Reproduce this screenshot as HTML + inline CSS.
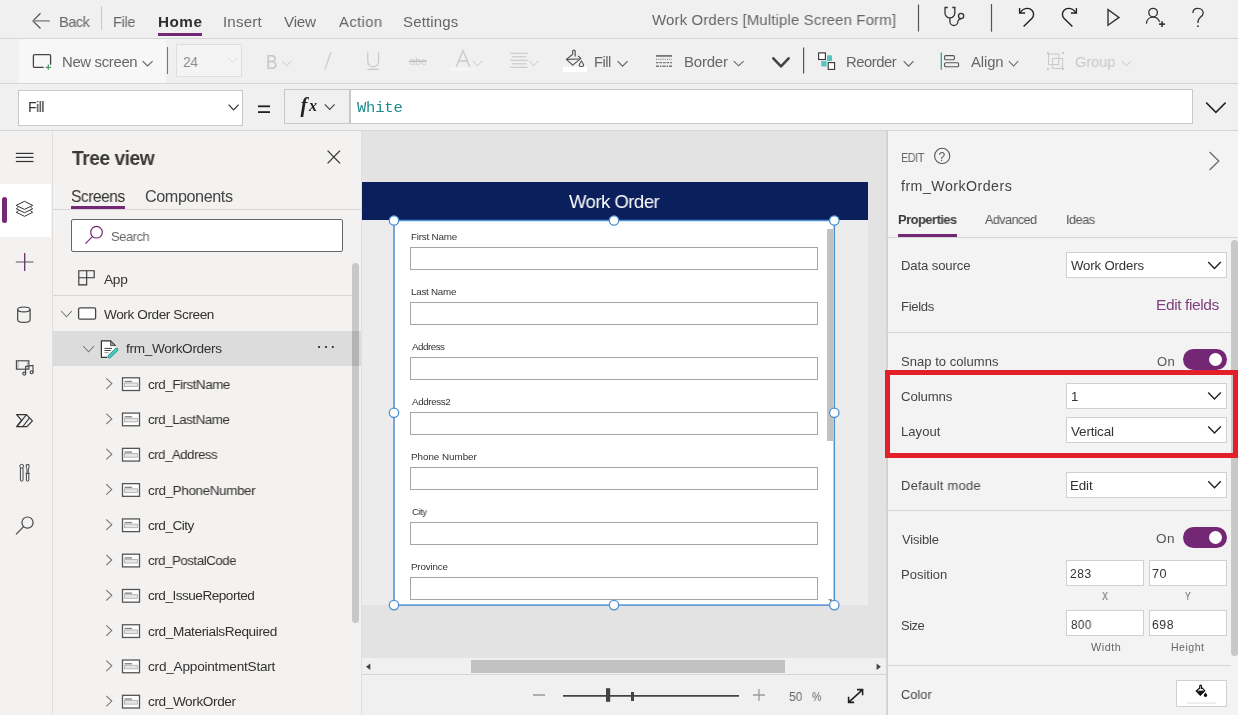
<!DOCTYPE html>
<html><head><meta charset="utf-8"><style>
html,body{margin:0;padding:0;}
body{width:1238px;height:716px;position:relative;overflow:hidden;background:#f0f0f0;font-family:"Liberation Sans",sans-serif;}
.r{position:absolute;}
.t{position:absolute;white-space:pre;transform-origin:0 0;will-change:transform;}
svg{position:absolute;overflow:visible;}
</style></head><body>
<div class="r" style="left:0px;top:0px;width:1238px;height:38px;background:#f0f0f0"></div><div class="r" style="left:0px;top:38px;width:1238px;height:1px;background:#d6d6d6"></div><div class="r" style="left:0px;top:39px;width:1238px;height:44px;background:#f0f0f0"></div><div class="r" style="left:19px;top:39px;width:147px;height:44px;background:#f7f7f7"></div><div class="r" style="left:0px;top:83px;width:1238px;height:1px;background:#d6d6d6"></div><div class="r" style="left:0px;top:84px;width:1238px;height:46px;background:#f0f0f0"></div><div class="r" style="left:0px;top:130px;width:1238px;height:1px;background:#d6d6d6"></div><div class="r" style="left:0px;top:131px;width:52px;height:584px;background:#f3f2f1"></div><div class="r" style="left:52px;top:131px;width:1px;height:584px;background:#e1dfdd"></div><div class="r" style="left:0px;top:184px;width:51px;height:53px;background:#ffffff"></div><div class="r" style="left:2px;top:197px;width:5px;height:26px;background:#742774;border-radius:3px"></div><div class="r" style="left:53px;top:131px;width:308px;height:584px;background:#f3f2f1"></div><div class="r" style="left:361px;top:131px;width:1px;height:584px;background:#e1dfdd"></div><div class="r" style="left:53px;top:209px;width:308px;height:1px;background:#d6d6d6"></div><div class="r" style="left:71px;top:206px;width:54px;height:3px;background:#742774"></div><div class="r" style="left:53px;top:295px;width:299px;height:1px;background:#d6d6d6"></div><div class="r" style="left:53px;top:331px;width:308px;height:35px;background:#dcdcdc"></div><div class="r" style="left:71px;top:219px;width:272px;height:33px;background:#ffffff;border:1px solid #666;box-sizing:border-box;border-radius:2px"></div><div class="r" style="left:352px;top:263px;width:7px;height:360px;background:#c8c8c8;border-radius:4px"></div><div class="r" style="left:352px;top:331px;width:7px;height:35px;background:#b4b4b4"></div><div class="r" style="left:362px;top:131px;width:524px;height:527px;background:#e3e3e3"></div><div class="r" style="left:362px;top:182px;width:506px;height:38px;background:#0a1f5c"></div><div class="r" style="left:362px;top:220px;width:506px;height:385px;background:#ececec"></div><div class="r" style="left:395px;top:220px;width:439px;height:385px;background:#ffffff"></div><div class="r" style="left:410px;top:247px;width:408px;height:23px;background:#fff;border:1px solid #a6a6a6;box-sizing:border-box"></div><div class="r" style="left:410px;top:302px;width:408px;height:23px;background:#fff;border:1px solid #a6a6a6;box-sizing:border-box"></div><div class="r" style="left:410px;top:357px;width:408px;height:23px;background:#fff;border:1px solid #a6a6a6;box-sizing:border-box"></div><div class="r" style="left:410px;top:412px;width:408px;height:23px;background:#fff;border:1px solid #a6a6a6;box-sizing:border-box"></div><div class="r" style="left:410px;top:467px;width:408px;height:23px;background:#fff;border:1px solid #a6a6a6;box-sizing:border-box"></div><div class="r" style="left:410px;top:522px;width:408px;height:23px;background:#fff;border:1px solid #a6a6a6;box-sizing:border-box"></div><div class="r" style="left:410px;top:577px;width:408px;height:23px;background:#fff;border:1px solid #a6a6a6;box-sizing:border-box"></div><div class="r" style="left:827px;top:229px;width:6px;height:212px;background:#c2c2c2"></div><div class="r" style="left:362px;top:658px;width:524px;height:16px;background:#f0f0f0"></div><div class="r" style="left:471px;top:660px;width:314px;height:13px;background:#c2c2c2"></div><div class="r" style="left:362px;top:674px;width:524px;height:1px;background:#d6d6d6"></div><div class="r" style="left:362px;top:675px;width:524px;height:40px;background:#f0f0f0"></div><div class="r" style="left:886px;top:131px;width:1px;height:584px;background:#d6d6d6"></div><div class="r" style="left:887px;top:131px;width:351px;height:584px;background:#f3f3f3"></div><div class="r" style="left:887px;top:131px;width:1px;height:584px;background:#d0d0d0"></div><div class="r" style="left:887px;top:237px;width:351px;height:1px;background:#d6d6d6"></div><div class="r" style="left:898px;top:234px;width:59px;height:3px;background:#742774"></div><div class="r" style="left:887px;top:332px;width:344px;height:1px;background:#d6d6d6"></div><div class="r" style="left:887px;top:510px;width:344px;height:1px;background:#d6d6d6"></div><div class="r" style="left:887px;top:665px;width:344px;height:1px;background:#d6d6d6"></div><div class="r" style="left:1231px;top:240px;width:7px;height:416px;background:#c8c8c8;border-radius:4px"></div><div class="r" style="left:1066px;top:252px;width:161px;height:26px;background:#fff;border:1px solid #d0d0d0;box-sizing:border-box"></div><div class="r" style="left:1066px;top:383px;width:161px;height:26px;background:#fff;border:1px solid #d0d0d0;box-sizing:border-box"></div><div class="r" style="left:1066px;top:417px;width:161px;height:26px;background:#fff;border:1px solid #d0d0d0;box-sizing:border-box"></div><div class="r" style="left:1066px;top:472px;width:161px;height:26px;background:#fff;border:1px solid #d0d0d0;box-sizing:border-box"></div><div class="r" style="left:1066px;top:560px;width:78px;height:26px;background:#fff;border:1px solid #d0d0d0;box-sizing:border-box"></div><div class="r" style="left:1149px;top:560px;width:78px;height:26px;background:#fff;border:1px solid #d0d0d0;box-sizing:border-box"></div><div class="r" style="left:1066px;top:610px;width:78px;height:26px;background:#fff;border:1px solid #d0d0d0;box-sizing:border-box"></div><div class="r" style="left:1149px;top:610px;width:78px;height:26px;background:#fff;border:1px solid #d0d0d0;box-sizing:border-box"></div><div class="r" style="left:1176px;top:680px;width:51px;height:27px;background:#fff;border:1px solid #d0d0d0;box-sizing:border-box"></div><div class="r" style="left:1183px;top:349px;width:44px;height:21px;background:#742774;border-radius:11px"></div><div class="r" style="left:1209px;top:353px;width:13px;height:13px;background:#fff;border-radius:50%"></div><div class="r" style="left:1183px;top:527px;width:44px;height:21px;background:#742774;border-radius:11px"></div><div class="r" style="left:1209px;top:531px;width:13px;height:13px;background:#fff;border-radius:50%"></div><div class="r" style="left:885px;top:370px;width:353px;height:88px;border:5px solid #e3202a;box-sizing:border-box"></div><div class="r" style="left:18px;top:90px;width:225px;height:36px;background:#fff;border:1px solid #c8c8c8;box-sizing:border-box"></div><div class="r" style="left:284px;top:89px;width:66px;height:35px;background:#f0f0f0;border:1px solid #c8c8c8;box-sizing:border-box"></div><div class="r" style="left:350px;top:89px;width:843px;height:35px;background:#fff;border:1px solid #c8c8c8;box-sizing:border-box"></div><div class="r" style="left:176px;top:44px;width:66px;height:33px;background:#f4f4f4;border:1px solid #dedede;box-sizing:border-box"></div><div class="r" style="left:0px;top:715px;width:1238px;height:1px;background:#ffffff"></div>
<div class="t" style="left:58.50px;top:14.00px;font-size:15px;line-height:15px;font-weight:400;color:#666666;letter-spacing:-0.500px;transform:scaleX(0.9742);font-family:'Liberation Sans'">Back</div>
<div class="t" style="left:112.90px;top:14.00px;font-size:15px;line-height:15px;font-weight:400;color:#666666;letter-spacing:-0.400px;transform:scaleX(0.9727);font-family:'Liberation Sans'">File</div>
<div class="t" style="left:157.60px;top:14.00px;font-size:15px;line-height:15px;font-weight:700;color:#2f2f2f;letter-spacing:0.500px;transform:scaleX(1.0167);font-family:'Liberation Sans'">Home</div>
<div class="t" style="left:222.60px;top:14.00px;font-size:15px;line-height:15px;font-weight:400;color:#666666;letter-spacing:0.160px;transform:scaleX(1.0108);font-family:'Liberation Sans'">Insert</div>
<div class="t" style="left:284.00px;top:14.00px;font-size:15px;line-height:15px;font-weight:400;color:#666666;letter-spacing:-0.266px;transform:scaleX(1.0194);font-family:'Liberation Sans'">View</div>
<div class="t" style="left:338.50px;top:14.00px;font-size:15px;line-height:15px;font-weight:400;color:#666666;letter-spacing:0.400px;transform:scaleX(0.9884);font-family:'Liberation Sans'">Action</div>
<div class="t" style="left:403.00px;top:14.00px;font-size:15px;line-height:15px;font-weight:400;color:#666666;letter-spacing:0.143px;transform:scaleX(1.0);font-family:'Liberation Sans'">Settings</div>
<div class="t" style="left:651.60px;top:12.00px;font-size:15px;line-height:15px;font-weight:400;color:#666666;letter-spacing:0.145px;transform:scaleX(0.9975);font-family:'Liberation Sans'">Work Orders [Multiple Screen Form]</div>
<div class="t" style="left:61.50px;top:55.00px;font-size:14.8px;line-height:14.8px;font-weight:400;color:#666666;letter-spacing:-0.334px;transform:scaleX(1.0068);font-family:'Liberation Sans'">New screen</div>
<div class="t" style="left:182.70px;top:55.00px;font-size:14.8px;line-height:14.8px;font-weight:400;color:#8c8c8c;letter-spacing:-0.500px;transform:scaleX(0.94);font-family:'Liberation Sans'">24</div>
<div class="t" style="left:594.30px;top:55.00px;font-size:14.8px;line-height:14.8px;font-weight:400;color:#666666;letter-spacing:-0.500px;transform:scaleX(0.9813);font-family:'Liberation Sans'">Fill</div>
<div class="t" style="left:683.50px;top:55.00px;font-size:14.8px;line-height:14.8px;font-weight:400;color:#666666;letter-spacing:-0.200px;transform:scaleX(1.0119);font-family:'Liberation Sans'">Border</div>
<div class="t" style="left:845.50px;top:55.00px;font-size:14.8px;line-height:14.8px;font-weight:400;color:#666666;letter-spacing:-0.467px;transform:scaleX(1.002);font-family:'Liberation Sans'">Reorder</div>
<div class="t" style="left:970.70px;top:55.00px;font-size:14.8px;line-height:14.8px;font-weight:400;color:#666666;letter-spacing:-0.100px;transform:scaleX(0.9937);font-family:'Liberation Sans'">Align</div>
<div class="t" style="left:1074.80px;top:55.00px;font-size:14.8px;line-height:14.8px;font-weight:400;color:#c8c8c8;letter-spacing:-0.050px;transform:scaleX(0.985);font-family:'Liberation Sans'">Group</div>
<div class="t" style="left:27.90px;top:99.00px;font-size:15px;line-height:15px;font-weight:400;color:#333333;letter-spacing:-0.500px;transform:scaleX(0.9375);font-family:'Liberation Sans'">Fill</div>
<div class="t" style="left:356.70px;top:101.00px;font-size:15.5px;line-height:15.5px;font-weight:400;color:#1e8a8a;letter-spacing:-0.200px;transform:scaleX(1.0022);font-family:'Liberation Mono'">White</div>
<div class="t" style="left:71.50px;top:149.00px;font-size:19.8px;line-height:19.8px;font-weight:700;color:#3a3938;letter-spacing:-0.500px;transform:scaleX(0.9706);font-family:'Liberation Sans'">Tree view</div>
<div class="t" style="left:70.50px;top:188.00px;font-size:16.2px;line-height:16.2px;font-weight:400;color:#323130;letter-spacing:-0.500px;transform:scaleX(0.9618);font-family:'Liberation Sans'">Screens</div>
<div class="t" style="left:144.60px;top:188.00px;font-size:16.2px;line-height:16.2px;font-weight:400;color:#444444;letter-spacing:-0.422px;transform:scaleX(0.9954);font-family:'Liberation Sans'">Components</div>
<div class="t" style="left:110.90px;top:230.00px;font-size:13.2px;line-height:13.2px;font-weight:400;color:#666666;letter-spacing:-0.480px;transform:scaleX(0.9816);font-family:'Liberation Sans'">Search</div>
<div class="t" style="left:103.80px;top:273.00px;font-size:13.6px;line-height:13.6px;font-weight:400;color:#323130;letter-spacing:-0.300px;transform:scaleX(1.0087);font-family:'Liberation Sans'">App</div>
<div class="t" style="left:103.80px;top:308.00px;font-size:13.6px;line-height:13.6px;font-weight:400;color:#323130;letter-spacing:-0.401px;transform:scaleX(0.9982);font-family:'Liberation Sans'">Work Order Screen</div>
<div class="t" style="left:125.70px;top:342.00px;font-size:13.6px;line-height:13.6px;font-weight:400;color:#323130;letter-spacing:-0.339px;transform:scaleX(1.0032);font-family:'Liberation Sans'">frm_WorkOrders</div>
<div class="t" style="left:147.80px;top:378.00px;font-size:13.6px;line-height:13.6px;font-weight:400;color:#323130;letter-spacing:-0.500px;transform:scaleX(0.9915);font-family:'Liberation Sans'">crd_FirstName</div>
<div class="t" style="left:147.80px;top:413.00px;font-size:13.6px;line-height:13.6px;font-weight:400;color:#323130;letter-spacing:-0.500px;transform:scaleX(0.9889);font-family:'Liberation Sans'">crd_LastName</div>
<div class="t" style="left:147.80px;top:448.00px;font-size:13.6px;line-height:13.6px;font-weight:400;color:#323130;letter-spacing:-0.500px;transform:scaleX(0.9771);font-family:'Liberation Sans'">crd_Address</div>
<div class="t" style="left:147.80px;top:484.00px;font-size:13.6px;line-height:13.6px;font-weight:400;color:#323130;letter-spacing:-0.400px;transform:scaleX(0.9926);font-family:'Liberation Sans'">crd_PhoneNumber</div>
<div class="t" style="left:147.80px;top:519.00px;font-size:13.6px;line-height:13.6px;font-weight:400;color:#323130;letter-spacing:-0.500px;transform:scaleX(0.9933);font-family:'Liberation Sans'">crd_City</div>
<div class="t" style="left:147.80px;top:554.00px;font-size:13.6px;line-height:13.6px;font-weight:400;color:#323130;letter-spacing:-0.500px;transform:scaleX(0.982);font-family:'Liberation Sans'">crd_PostalCode</div>
<div class="t" style="left:147.80px;top:589.00px;font-size:13.6px;line-height:13.6px;font-weight:400;color:#323130;letter-spacing:-0.500px;transform:scaleX(0.9981);font-family:'Liberation Sans'">crd_IssueReported</div>
<div class="t" style="left:147.80px;top:625.00px;font-size:13.6px;line-height:13.6px;font-weight:400;color:#323130;letter-spacing:-0.380px;transform:scaleX(1.0016);font-family:'Liberation Sans'">crd_MaterialsRequired</div>
<div class="t" style="left:147.80px;top:660.00px;font-size:13.6px;line-height:13.6px;font-weight:400;color:#323130;letter-spacing:-0.231px;transform:scaleX(1.0024);font-family:'Liberation Sans'">crd_AppointmentStart</div>
<div class="t" style="left:147.80px;top:695.00px;font-size:13.6px;line-height:13.6px;font-weight:400;color:#323130;letter-spacing:-0.384px;transform:scaleX(0.9966);font-family:'Liberation Sans'">crd_WorkOrder</div>
<div class="t" style="left:569.30px;top:192.00px;font-size:19px;line-height:19px;font-weight:400;color:#ffffff;letter-spacing:-0.500px;transform:scaleX(0.972);font-family:'Liberation Sans'">Work Order</div>
<div class="t" style="left:411.20px;top:232.00px;font-size:9.8px;line-height:9.8px;font-weight:400;color:#333333;letter-spacing:-0.200px;transform:scaleX(1.0022);font-family:'Liberation Sans'">First Name</div>
<div class="t" style="left:411.20px;top:287.00px;font-size:9.8px;line-height:9.8px;font-weight:400;color:#333333;letter-spacing:-0.250px;transform:scaleX(1.0);font-family:'Liberation Sans'">Last Name</div>
<div class="t" style="left:412.20px;top:342.00px;font-size:9.8px;line-height:9.8px;font-weight:400;color:#333333;letter-spacing:-0.500px;transform:scaleX(0.997);font-family:'Liberation Sans'">Address</div>
<div class="t" style="left:412.20px;top:397.00px;font-size:9.8px;line-height:9.8px;font-weight:400;color:#333333;letter-spacing:-0.400px;transform:scaleX(1.0026);font-family:'Liberation Sans'">Address2</div>
<div class="t" style="left:411.20px;top:452.00px;font-size:9.8px;line-height:9.8px;font-weight:400;color:#333333;letter-spacing:-0.037px;transform:scaleX(1.0047);font-family:'Liberation Sans'">Phone Number</div>
<div class="t" style="left:412.20px;top:507.00px;font-size:9.8px;line-height:9.8px;font-weight:400;color:#333333;letter-spacing:-0.400px;transform:scaleX(0.9625);font-family:'Liberation Sans'">City</div>
<div class="t" style="left:411.20px;top:562.00px;font-size:9.8px;line-height:9.8px;font-weight:400;color:#333333;letter-spacing:-0.171px;transform:scaleX(0.9972);font-family:'Liberation Sans'">Province</div>
<div class="t" style="left:788.80px;top:691.00px;font-size:12.8px;line-height:12.8px;font-weight:400;color:#666666;letter-spacing:-0.200px;transform:scaleX(0.9538);font-family:'Liberation Sans'">50</div>
<div class="t" style="left:811.80px;top:691.00px;font-size:12.8px;line-height:12.8px;font-weight:400;color:#666666;letter-spacing:0.000px;transform:scaleX(0.8273);font-family:'Liberation Sans'">%</div>
<div class="t" style="left:900.80px;top:152.00px;font-size:12px;line-height:12px;font-weight:400;color:#666666;letter-spacing:-0.500px;transform:scaleX(0.904);font-family:'Liberation Sans'">EDIT</div>
<div class="t" style="left:900.60px;top:179.00px;font-size:14.2px;line-height:14.2px;font-weight:400;color:#444444;letter-spacing:0.477px;transform:scaleX(0.9964);font-family:'Liberation Sans'">frm_WorkOrders</div>
<div class="t" style="left:898.40px;top:213.00px;font-size:13px;line-height:13px;font-weight:700;color:#3a3938;letter-spacing:-0.500px;transform:scaleX(0.9897);font-family:'Liberation Sans'">Properties</div>
<div class="t" style="left:985.20px;top:213.00px;font-size:13px;line-height:13px;font-weight:400;color:#555555;letter-spacing:-0.500px;transform:scaleX(0.9593);font-family:'Liberation Sans'">Advanced</div>
<div class="t" style="left:1065.80px;top:213.00px;font-size:13px;line-height:13px;font-weight:400;color:#555555;letter-spacing:-0.500px;transform:scaleX(0.9786);font-family:'Liberation Sans'">Ideas</div>
<div class="t" style="left:900.90px;top:259.00px;font-size:13px;line-height:13px;font-weight:400;color:#444444;letter-spacing:-0.140px;transform:scaleX(1.0119);font-family:'Liberation Sans'">Data source</div>
<div class="t" style="left:1070.90px;top:259.00px;font-size:13.2px;line-height:13.2px;font-weight:400;color:#333333;letter-spacing:-0.140px;transform:scaleX(0.9973);font-family:'Liberation Sans'">Work Orders</div>
<div class="t" style="left:900.90px;top:300.00px;font-size:13px;line-height:13px;font-weight:400;color:#444444;letter-spacing:-0.320px;transform:scaleX(1.0063);font-family:'Liberation Sans'">Fields</div>
<div class="t" style="left:1156.00px;top:297.00px;font-size:15.5px;line-height:15.5px;font-weight:400;color:#7d3f7d;letter-spacing:-0.400px;transform:scaleX(1.0);font-family:'Liberation Sans'">Edit fields</div>
<div class="t" style="left:900.90px;top:355.00px;font-size:13px;line-height:13px;font-weight:400;color:#444444;letter-spacing:0.029px;transform:scaleX(1.0021);font-family:'Liberation Sans'">Snap to columns</div>
<div class="t" style="left:1156.80px;top:355.00px;font-size:13px;line-height:13px;font-weight:400;color:#555555;letter-spacing:0.400px;transform:scaleX(0.9813);font-family:'Liberation Sans'">On</div>
<div class="t" style="left:900.90px;top:390.00px;font-size:13px;line-height:13px;font-weight:400;color:#444444;letter-spacing:-0.100px;transform:scaleX(1.0143);font-family:'Liberation Sans'">Columns</div>
<div class="t" style="left:1070.70px;top:390.00px;font-size:13.2px;line-height:13.2px;font-weight:400;color:#333333;letter-spacing:-0.700px;transform:scaleX(1);font-family:'Liberation Sans'">1</div>
<div class="t" style="left:900.90px;top:425.00px;font-size:13px;line-height:13px;font-weight:400;color:#444444;letter-spacing:0.040px;transform:scaleX(1.0026);font-family:'Liberation Sans'">Layout</div>
<div class="t" style="left:1070.90px;top:425.00px;font-size:13.2px;line-height:13.2px;font-weight:400;color:#333333;letter-spacing:-0.171px;transform:scaleX(1.022);font-family:'Liberation Sans'">Vertical</div>
<div class="t" style="left:900.90px;top:479.00px;font-size:13px;line-height:13px;font-weight:400;color:#444444;letter-spacing:0.254px;transform:scaleX(0.9924);font-family:'Liberation Sans'">Default mode</div>
<div class="t" style="left:1069.90px;top:479.00px;font-size:13.2px;line-height:13.2px;font-weight:400;color:#333333;letter-spacing:-0.133px;transform:scaleX(1.0143);font-family:'Liberation Sans'">Edit</div>
<div class="t" style="left:902.00px;top:533.00px;font-size:13px;line-height:13px;font-weight:400;color:#444444;letter-spacing:-0.167px;transform:scaleX(1.0);font-family:'Liberation Sans'">Visible</div>
<div class="t" style="left:1156.20px;top:532.00px;font-size:13px;line-height:13px;font-weight:400;color:#555555;letter-spacing:0.500px;transform:scaleX(1.0438);font-family:'Liberation Sans'">On</div>
<div class="t" style="left:901.00px;top:568.00px;font-size:13px;line-height:13px;font-weight:400;color:#444444;letter-spacing:0.000px;transform:scaleX(1.0);font-family:'Liberation Sans'">Position</div>
<div class="t" style="left:1070.00px;top:568.00px;font-size:12px;line-height:12px;font-weight:400;color:#333333;letter-spacing:0.500px;transform:scaleX(1.005);font-family:'Liberation Sans'">283</div>
<div class="t" style="left:1152.30px;top:568.00px;font-size:12px;line-height:12px;font-weight:400;color:#333333;letter-spacing:0.500px;transform:scaleX(1.0538);font-family:'Liberation Sans'">70</div>
<div class="t" style="left:1102.10px;top:591.00px;font-size:10.5px;line-height:10.5px;font-weight:400;color:#666666;letter-spacing:0.000px;transform:scaleX(0.8571);font-family:'Liberation Sans'">X</div>
<div class="t" style="left:1185.10px;top:591.00px;font-size:10.5px;line-height:10.5px;font-weight:400;color:#666666;letter-spacing:0.000px;transform:scaleX(0.8143);font-family:'Liberation Sans'">Y</div>
<div class="t" style="left:901.00px;top:619.00px;font-size:13px;line-height:13px;font-weight:400;color:#444444;letter-spacing:-0.500px;transform:scaleX(0.9955);font-family:'Liberation Sans'">Size</div>
<div class="t" style="left:1071.00px;top:619.00px;font-size:12px;line-height:12px;font-weight:400;color:#333333;letter-spacing:0.400px;transform:scaleX(0.9714);font-family:'Liberation Sans'">800</div>
<div class="t" style="left:1152.30px;top:619.00px;font-size:12px;line-height:12px;font-weight:400;color:#333333;letter-spacing:0.500px;transform:scaleX(1.025);font-family:'Liberation Sans'">698</div>
<div class="t" style="left:1090.80px;top:642.00px;font-size:10.5px;line-height:10.5px;font-weight:400;color:#666666;letter-spacing:0.500px;transform:scaleX(1.0321);font-family:'Liberation Sans'">Width</div>
<div class="t" style="left:1170.70px;top:642.00px;font-size:10.5px;line-height:10.5px;font-weight:400;color:#666666;letter-spacing:0.480px;transform:scaleX(1.0063);font-family:'Liberation Sans'">Height</div>
<div class="t" style="left:901.00px;top:688.00px;font-size:13px;line-height:13px;font-weight:400;color:#444444;letter-spacing:0.100px;transform:scaleX(0.9742);font-family:'Liberation Sans'">Color</div>
<svg width="1238" height="716" viewBox="0 0 1238 716" style="position:absolute;left:0;top:0"><path d="M40.5,13.3 L33,20.9 L40.5,28.5" fill="none" stroke="#555" stroke-width="1.3"/><path d="M33,20.9 L49.8,20.9" fill="none" stroke="#888" stroke-width="1.5"/><path d="M101.5,6.5 L101.5,30" fill="none" stroke="#c8c8c8" stroke-width="1"/><rect x="158" y="33" width="44" height="3" fill="#742774"/><path d="M918.5,4.5 L918.5,31.5" fill="none" stroke="#555" stroke-width="1.2"/><path d="M991.5,4 L991.5,31.7" fill="none" stroke="#555" stroke-width="1.2"/><path d="M944.5,7.5 H947.8 M952.3,7.5 H955.6 M945,7.5 V13 A4.8,4.8 0 0 0 954.8,13 V7.5 M949.9,17.6 V21.5 A4,4 0 0 0 957.9,21.5 V21 Q957.9,20 961.1,18.7" fill="none" stroke="#333" stroke-width="1.3"/><circle cx="961.1" cy="16" r="2.6" fill="none" stroke="#333" stroke-width="1.3"/><path d="M1019.6,8 V13 H1025.1" fill="none" stroke="#222" stroke-width="1.4"/><path d="M1020.2,12.8 C1022,9.5 1024.8,8.4 1027.7,8.4 C1031,8.4 1033.6,11 1033.6,14.5 C1033.6,16.3 1033,17.3 1031.8,18.6 L1023.6,26.4" fill="none" stroke="#222" stroke-width="1.4"/><g transform="translate(2096,0) scale(-1,1)"><path d="M1019.6,8 V13 H1025.1" fill="none" stroke="#222" stroke-width="1.4"/><path d="M1020.2,12.8 C1022,9.5 1024.8,8.4 1027.7,8.4 C1031,8.4 1033.6,11 1033.6,14.5 C1033.6,16.3 1033,17.3 1031.8,18.6 L1023.6,26.4" fill="none" stroke="#222" stroke-width="1.4"/></g><path d="M1108,9.6 L1108,25.2 L1119,17.4 Z" fill="none" stroke="#333" stroke-width="1.4" stroke-linejoin="miter"/><circle cx="1153.1" cy="12.6" r="4.3" fill="none" stroke="#333" stroke-width="1.3"/><path d="M1146.4,23.6 C1146.6,19.6 1149.5,17.1 1153.1,17.1 C1156.2,17.1 1158.6,19 1159.6,21.8" fill="none" stroke="#333" stroke-width="1.3"/><path d="M1162,21.2 V27 M1159.1,24.1 H1164.9" fill="none" stroke="#333" stroke-width="1.6"/><path d="M1192.9,13 C1192.9,10 1195.2,8.3 1198,8.3 C1201,8.3 1203.2,10.4 1203.2,13 C1203.2,15.4 1201.4,16.6 1199.7,18 C1198.4,19.1 1197.9,20.4 1197.9,23" fill="none" stroke="#333" stroke-width="1.3"/><circle cx="1197.9" cy="26.2" r="0.9" fill="#333"/><path d="M43.7,67.4 H34.6 Q33.4,67.4 33.4,66.2 V55.8 Q33.4,54.6 34.6,54.6 H49.4 Q50.6,54.6 50.6,55.8 V64.8" fill="none" stroke="#444" stroke-width="1.3"/><path d="M48.3,64.6 V69.7 M45.6,67.3 H50.9" fill="none" stroke="#4a9a5a" stroke-width="1.2"/><path d="M142.6,61.2 L147.6,66 L152.6,61.2" fill="none" stroke="#606060" stroke-width="1.05"/><path d="M167.5,47 L167.5,74" fill="none" stroke="#777" stroke-width="1.1"/><path d="M228,57.8 L232.65,62.8 L237.3,57.8" fill="none" stroke="#dcdcdc" stroke-width="1"/><text x="266" y="68.6" font-family="Liberation Sans" font-size="20.5" fill="#c8c8c8" textLength="11.5" lengthAdjust="spacingAndGlyphs">B</text><path d="M282.2,61.2 L286.6,66 L291,61.2" fill="none" stroke="#c8c8c8" stroke-width="1"/><path d="M330.9,52.3 L324.9,69.6" fill="none" stroke="#c8c8c8" stroke-width="1.2"/><path d="M367.8,52.3 V61.5 A5.4,5.4 0 0 0 378.6,61.5 V52.3 M367.3,69.4 H378.9" fill="none" stroke="#c8c8c8" stroke-width="1.2"/><text x="409.2" y="64.8" font-family="Liberation Sans" font-size="10.5" fill="#cfcfcf" textLength="17" lengthAdjust="spacingAndGlyphs">abc</text><path d="M408.8,61.2 L427,61.2" fill="none" stroke="#b0b0b0" stroke-width="1.1"/><path d="M456.4,66.8 L463,50.4 L469.8,66.8 M458.8,61 H467.4" fill="none" stroke="#c8c8c8" stroke-width="1.3"/><rect x="450.5" y="67.5" width="24.5" height="3.5" fill="#f5f5f5"/><path d="M473,61 L477.5,65.9 L482,61" fill="none" stroke="#c8c8c8" stroke-width="1"/><path d="M510.1,53.3 L527.9,53.3" fill="none" stroke="#c8c8c8" stroke-width="1.1"/><path d="M511.9,56.8 L526.3,56.8" fill="none" stroke="#c8c8c8" stroke-width="1.1"/><path d="M510.1,60.3 L527.9,60.3" fill="none" stroke="#c8c8c8" stroke-width="1.1"/><path d="M511.9,63.8 L526.3,63.8" fill="none" stroke="#c8c8c8" stroke-width="1.1"/><path d="M510.1,67.3 L527.9,67.3" fill="none" stroke="#c8c8c8" stroke-width="1.1"/><path d="M529.4,61 L533.7,65.9 L538,61" fill="none" stroke="#c8c8c8" stroke-width="1"/><rect x="563" y="67" width="24" height="5" fill="#ffffff"/><path d="M572.7,54.2 L566.4,59.4 L572.7,65.1 L580.9,58.4 L578.1,56" fill="none" stroke="#555" stroke-width="1.2" stroke-linejoin="round"/><path d="M566.6,59.3 L580.4,59" fill="none" stroke="#555" stroke-width="1.2"/><path d="M572.7,54.5 V51.6 Q572.7,50.2 573.95,50.2 Q575.2,50.2 575.2,51.6 V56.6" fill="none" stroke="#555" stroke-width="1.2"/><path d="M581.5,61 Q579.2,64.2 579.2,65.2 Q579.2,66.5 581.4,66.5 Q583.6,66.5 583.6,65.2 Q583.6,64.2 581.5,61 Z" fill="none" stroke="#555" stroke-width="1.1"/><path d="M617.6,61.2 L622.6,66.2 L627.6,61.2" fill="none" stroke="#606060" stroke-width="1.05"/><rect x="656" y="55" width="16" height="1.8" fill="#777"/><path d="M656,59.3 H672" stroke="#777" stroke-width="1.1" stroke-dasharray="1.1,1.1"/><path d="M656,62.6 H672" stroke="#777" stroke-width="1.1" stroke-dasharray="2.5,1"/><path d="M656,66.2 H672" stroke="#777" stroke-width="1.6" stroke-dasharray="3,1,1.5,1"/><path d="M733.7,61.2 L738.6500000000001,65.9 L743.6,61.2" fill="none" stroke="#606060" stroke-width="1.05"/><path d="M773.3,58.3 L781,66.3 L788.6,58.3" fill="none" stroke="#444" stroke-width="2.6" stroke-linecap="round" stroke-linejoin="round"/><path d="M803.6,47.4 L803.6,73.6" fill="none" stroke="#555" stroke-width="1.2"/><rect x="821.2" y="55.2" width="10.8" height="11.4" rx="1.2" fill="#54c5c0"/><rect x="818.6" y="52.9" width="6.8" height="6.6" fill="#fff" stroke="#f0f0f0" stroke-width="3.2"/><rect x="828.2" y="62.6" width="6.4" height="6.8" fill="#fff" stroke="#f0f0f0" stroke-width="3.2"/><rect x="818.6" y="52.9" width="6.8" height="6.6" fill="#fff" stroke="#333" stroke-width="1.1"/><rect x="828.2" y="62.6" width="6.4" height="6.8" fill="#fff" stroke="#333" stroke-width="1.1"/><path d="M903.7,61.2 L908.6,66.2 L913.5,61.2" fill="none" stroke="#606060" stroke-width="1.05"/><path d="M941.3,52.4 L941.3,69.8" fill="none" stroke="#2aa8a0" stroke-width="1.3"/><rect x="944.6" y="55.6" width="9.8" height="4.2" rx="1" fill="none" stroke="#555" stroke-width="1.1"/><rect x="944.6" y="62.8" width="14" height="4" rx="1" fill="none" stroke="#555" stroke-width="1.1"/><path d="M1008.8,61 L1013.55,66 L1018.3,61" fill="none" stroke="#606060" stroke-width="1.05"/><rect x="1047.1" y="52.1" width="1.8" height="1.8" fill="#c4c4c4"/><rect x="1062.1" y="52.1" width="1.8" height="1.8" fill="#c4c4c4"/><rect x="1047.1" y="68.1" width="1.8" height="1.8" fill="#c4c4c4"/><rect x="1062.1" y="68.1" width="1.8" height="1.8" fill="#c4c4c4"/><rect x="1048.6" y="54" width="10.2" height="10.6" fill="none" stroke="#c8c8c8" stroke-width="1"/><rect x="1052.6" y="58.4" width="10" height="10" fill="none" stroke="#c8c8c8" stroke-width="1"/><path d="M1122,61 L1126.5,66 L1131,61" fill="none" stroke="#c8c8c8" stroke-width="1"/><path d="M228.6,104.6 L233.6,109.8 L238.6,104.6" fill="none" stroke="#333" stroke-width="1.2"/><rect x="258" y="105.4" width="12" height="1.8" fill="#222"/><rect x="258" y="111.2" width="12" height="1.8" fill="#222"/><text x="300.5" y="112.4" font-family="Liberation Serif" font-style="italic" font-weight="bold" font-size="20.5" fill="#222">f</text><text x="309" y="110.8" font-family="Liberation Serif" font-style="italic" font-weight="bold" font-size="16" fill="#222">x</text><path d="M324.8,104.3 L329.70000000000005,109.4 L334.6,104.3" fill="none" stroke="#444" stroke-width="1.1"/><path d="M1206.2,102.6 L1215.9,112.4 L1225.6,102.6" fill="none" stroke="#222" stroke-width="1.5"/><path d="M15.8,153.4 L33.5,153.4" fill="none" stroke="#333" stroke-width="1.2"/><path d="M15.8,157.4 L33.5,157.4" fill="none" stroke="#333" stroke-width="1.2"/><path d="M15.8,161.5 L33.5,161.5" fill="none" stroke="#333" stroke-width="1.2"/><path d="M18.2,207.4 L16.3,208.8 L24.5,212.7 L32.7,208.8 L30.8,207.4 M18.6,210.6 L16.3,212.3 L24.5,216.3 L32.7,212.3 L30.4,210.6" fill="none" stroke="#333" stroke-width="1" stroke-linejoin="round"/><path d="M16.2,205.4 L24.5,201.3 L32.7,205.4 L24.5,209.4 Z" fill="#fff" stroke="#333" stroke-width="1" stroke-linejoin="round"/><path d="M15.8,262 H33.5 M24.6,253 V271" fill="none" stroke="#555" stroke-width="1.2"/><path d="M24.6,253 V271" fill="none" stroke="#6b3a6b" stroke-width="1.2"/><ellipse cx="23.9" cy="309.4" rx="6.2" ry="2.4" fill="none" stroke="#444" stroke-width="1.2"/><path d="M17.7,309.4 V320 A6.2,2.4 0 0 0 30.1,320 V309.4" fill="none" stroke="#444" stroke-width="1.2"/><rect x="16.4" y="360.8" width="12.5" height="8.4" fill="none" stroke="#444" stroke-width="1.1"/><path d="M18,361.5 V368.5 M27.3,361.5 V368.5" stroke="#444" stroke-width="0.8" stroke-dasharray="1,1"/><path d="M25.6,373.5 V366.4 L33,365.4 V372.2" fill="none" stroke="#444" stroke-width="1.1"/><circle cx="24.3" cy="373.6" r="1.5" fill="none" stroke="#444" stroke-width="1.1"/><circle cx="31.6" cy="372.3" r="1.5" fill="none" stroke="#444" stroke-width="1.1"/><path d="M16.6,414.6 H26.4 L32.4,420.9 L27,426.6 H16.6 L21.6,420.4 Z" fill="none" stroke="#333" stroke-width="1.2" stroke-linejoin="round"/><path d="M26.4,414.6 L16.8,426.8 M29.6,417.8 L22.4,427" fill="none" stroke="#333" stroke-width="1.1"/><path d="M20.4,468 V480 Q20.4,481.2 21.7,481.2 Q23,481.2 23,480 V468" fill="none" stroke="#444" stroke-width="1"/><circle cx="21.7" cy="466.2" r="1.9" fill="none" stroke="#444" stroke-width="1"/><path d="M26.3,464.6 H29 V467.6 L28.3,469 V473.4 M26.3,464.6 V467.6 L27,469 V473.4 M25.6,473.4 H29.7 M26.4,473.4 V480 Q26.4,481.2 27.6,481.2 Q28.8,481.2 28.8,480 V473.4" fill="none" stroke="#444" stroke-width="1"/><circle cx="27.5" cy="522.6" r="5.6" fill="none" stroke="#444" stroke-width="1.2"/><path d="M23.6,526.6 L16,534.3" fill="none" stroke="#444" stroke-width="1.2"/><path d="M327.6,150.6 L340,163.4 M340,150.6 L327.6,163.4" fill="none" stroke="#333" stroke-width="1.3"/><circle cx="96.5" cy="232.2" r="5.8" fill="none" stroke="#742774" stroke-width="1.2"/><path d="M92.4,236.6 L85.4,243.6" fill="none" stroke="#742774" stroke-width="1.2"/><path d="M78.8,270.7 H94.2 V277.8 H86.7 V284.9 H78.8 Z M78.8,277.8 H86.7 V270.7" fill="none" stroke="#333" stroke-width="1.1"/><path d="M61.2,311 L66.5,316.8 L71.8,311" fill="none" stroke="#777" stroke-width="1.1"/><rect x="78.6" y="307.8" width="17" height="11.4" rx="1.5" fill="#fff" stroke="#444" stroke-width="1.3"/><path d="M83.2,346 L88.6,351.8 L94,346" fill="none" stroke="#777" stroke-width="1.1"/><path d="M101.4,341 H110.6 L115.4,345.6 V348 L108,355.5 L107.4,357.3 H101.4 Z" fill="#fff" stroke="none"/><path d="M107,357.3 H101.4 V340.9 H110.6 L115.4,345.6" fill="none" stroke="#333" stroke-width="1.2" stroke-linejoin="round"/><path d="M110.6,340.9 V345.6 H115.4 Z" fill="#9a9a9a" stroke="#333" stroke-width="0.8" stroke-linejoin="round"/><path d="M104.4,348.4 H112 M104.4,350.5 H110.8" stroke="#444" stroke-width="1"/><path d="M104.4,352.6 H108.6" stroke="#999" stroke-width="1"/><path d="M109.2,356.6 L116.6,349.6" stroke="#2a8f88" stroke-width="3.6" stroke-linecap="round"/><path d="M109.2,356.6 L116.6,349.6" stroke="#4cc9bd" stroke-width="2.2" stroke-linecap="round"/><circle cx="319.1" cy="347" r="1.1" fill="#222"/><circle cx="326" cy="347" r="1.1" fill="#222"/><circle cx="332.8" cy="347" r="1.1" fill="#222"/><path d="M106.3,378.40000000000003 L111.8,383.6 L106.3,388.8" fill="none" stroke="#777" stroke-width="1.1"/><rect x="122.5" y="377.80" width="17" height="12.7" fill="#fff" stroke="#555" stroke-width="1.3"/><rect x="124.6" y="380.80" width="7.5" height="1.4" fill="#888"/><rect x="124.4" y="383.00" width="13" height="3.6" fill="#e6e6e6" stroke="#aaa" stroke-width="0.8"/><path d="M106.3,413.68000000000006 L111.8,418.88000000000005 L106.3,424.08000000000004" fill="none" stroke="#777" stroke-width="1.1"/><rect x="122.5" y="413.08" width="17" height="12.7" fill="#fff" stroke="#555" stroke-width="1.3"/><rect x="124.6" y="416.08" width="7.5" height="1.4" fill="#888"/><rect x="124.4" y="418.28" width="13" height="3.6" fill="#e6e6e6" stroke="#aaa" stroke-width="0.8"/><path d="M106.3,448.96000000000004 L111.8,454.16 L106.3,459.36" fill="none" stroke="#777" stroke-width="1.1"/><rect x="122.5" y="448.36" width="17" height="12.7" fill="#fff" stroke="#555" stroke-width="1.3"/><rect x="124.6" y="451.36" width="7.5" height="1.4" fill="#888"/><rect x="124.4" y="453.56" width="13" height="3.6" fill="#e6e6e6" stroke="#aaa" stroke-width="0.8"/><path d="M106.3,484.24 L111.8,489.44 L106.3,494.64" fill="none" stroke="#777" stroke-width="1.1"/><rect x="122.5" y="483.64" width="17" height="12.7" fill="#fff" stroke="#555" stroke-width="1.3"/><rect x="124.6" y="486.64" width="7.5" height="1.4" fill="#888"/><rect x="124.4" y="488.84" width="13" height="3.6" fill="#e6e6e6" stroke="#aaa" stroke-width="0.8"/><path d="M106.3,519.5200000000001 L111.8,524.72 L106.3,529.9200000000001" fill="none" stroke="#777" stroke-width="1.1"/><rect x="122.5" y="518.92" width="17" height="12.7" fill="#fff" stroke="#555" stroke-width="1.3"/><rect x="124.6" y="521.92" width="7.5" height="1.4" fill="#888"/><rect x="124.4" y="524.12" width="13" height="3.6" fill="#e6e6e6" stroke="#aaa" stroke-width="0.8"/><path d="M106.3,554.8000000000001 L111.8,560.0 L106.3,565.2" fill="none" stroke="#777" stroke-width="1.1"/><rect x="122.5" y="554.20" width="17" height="12.7" fill="#fff" stroke="#555" stroke-width="1.3"/><rect x="124.6" y="557.20" width="7.5" height="1.4" fill="#888"/><rect x="124.4" y="559.40" width="13" height="3.6" fill="#e6e6e6" stroke="#aaa" stroke-width="0.8"/><path d="M106.3,590.08 L111.8,595.28 L106.3,600.48" fill="none" stroke="#777" stroke-width="1.1"/><rect x="122.5" y="589.48" width="17" height="12.7" fill="#fff" stroke="#555" stroke-width="1.3"/><rect x="124.6" y="592.48" width="7.5" height="1.4" fill="#888"/><rect x="124.4" y="594.68" width="13" height="3.6" fill="#e6e6e6" stroke="#aaa" stroke-width="0.8"/><path d="M106.3,625.36 L111.8,630.56 L106.3,635.76" fill="none" stroke="#777" stroke-width="1.1"/><rect x="122.5" y="624.76" width="17" height="12.7" fill="#fff" stroke="#555" stroke-width="1.3"/><rect x="124.6" y="627.76" width="7.5" height="1.4" fill="#888"/><rect x="124.4" y="629.96" width="13" height="3.6" fill="#e6e6e6" stroke="#aaa" stroke-width="0.8"/><path d="M106.3,660.64 L111.8,665.8399999999999 L106.3,671.04" fill="none" stroke="#777" stroke-width="1.1"/><rect x="122.5" y="660.04" width="17" height="12.7" fill="#fff" stroke="#555" stroke-width="1.3"/><rect x="124.6" y="663.04" width="7.5" height="1.4" fill="#888"/><rect x="124.4" y="665.24" width="13" height="3.6" fill="#e6e6e6" stroke="#aaa" stroke-width="0.8"/><path d="M106.3,695.92 L111.8,701.1199999999999 L106.3,706.3199999999999" fill="none" stroke="#777" stroke-width="1.1"/><rect x="122.5" y="695.32" width="17" height="12.7" fill="#fff" stroke="#555" stroke-width="1.3"/><rect x="124.6" y="698.32" width="7.5" height="1.4" fill="#888"/><rect x="124.4" y="700.52" width="13" height="3.6" fill="#e6e6e6" stroke="#aaa" stroke-width="0.8"/><rect x="394" y="220.5" width="440.3" height="384.6" fill="none" stroke="#4f92d4" stroke-width="1.5"/><circle cx="394" cy="220.5" r="4.7" fill="#fff" stroke="#4f92d4" stroke-width="1.3"/><circle cx="614" cy="220.5" r="4.7" fill="#fff" stroke="#4f92d4" stroke-width="1.3"/><circle cx="834.3" cy="220.5" r="4.7" fill="#fff" stroke="#4f92d4" stroke-width="1.3"/><circle cx="394" cy="412.8" r="4.7" fill="#fff" stroke="#4f92d4" stroke-width="1.3"/><circle cx="834.3" cy="412.8" r="4.7" fill="#fff" stroke="#4f92d4" stroke-width="1.3"/><circle cx="394" cy="605.1" r="4.7" fill="#fff" stroke="#4f92d4" stroke-width="1.3"/><circle cx="614" cy="605.1" r="4.7" fill="#fff" stroke="#4f92d4" stroke-width="1.3"/><circle cx="834.3" cy="605.1" r="4.7" fill="#fff" stroke="#4f92d4" stroke-width="1.3"/><path d="M828,599.4 H832 L831,601 Z" fill="#333"/><path d="M370.3,663.4 V670 L366,666.7 Z" fill="#444"/><path d="M876.6,663.4 V670 L880.9,666.7 Z" fill="#444"/><path d="M533,695 L545,695" fill="none" stroke="#a8a8a8" stroke-width="1.8"/><path d="M563,695.9 L739,695.9" fill="none" stroke="#444" stroke-width="1.8"/><rect x="606" y="688.2" width="4.2" height="13.6" fill="#444"/><rect x="631" y="692" width="3" height="9" fill="#444"/><path d="M753,695 H765 M759,689 V701" fill="none" stroke="#9a9a9a" stroke-width="1.3"/><path d="M848.6,702.4 L862.6,689.6 M848.6,696.8 V702.4 H854.2 M857,689.6 H862.6 V695.2" fill="none" stroke="#222" stroke-width="1.6"/><circle cx="942.2" cy="155.9" r="7.6" fill="none" stroke="#555" stroke-width="1.1"/><text x="938.6" y="160.6" font-family="Liberation Sans" font-size="12" fill="#555">?</text><path d="M1209.6,152 L1218.8,161.0 L1209.6,170" fill="none" stroke="#666" stroke-width="1.2"/><path d="M1208.2,262.1 L1214.5,268.6 L1220.8,262.1" fill="none" stroke="#222" stroke-width="1.4"/><path d="M1208.2,392.6 L1214.5,399.1 L1220.8,392.6" fill="none" stroke="#222" stroke-width="1.4"/><path d="M1208.2,426.6 L1214.5,433.1 L1220.8,426.6" fill="none" stroke="#222" stroke-width="1.4"/><path d="M1208.2,481.3 L1214.5,487.8 L1220.8,481.3" fill="none" stroke="#222" stroke-width="1.4"/><path d="M1196,691.2 L1200.3,695.7 L1205,690.9 Z" fill="#111" stroke="#111" stroke-width="0.8" stroke-linejoin="round"/><path d="M1196,691.2 L1199.7,688 M1201.5,687.3 L1205,690.9" fill="none" stroke="#111" stroke-width="1.2"/><path d="M1199.7,688.8 V686.2 Q1199.7,685.2 1200.6,685.2 Q1201.5,685.2 1201.5,686.2 V689" fill="none" stroke="#111" stroke-width="1.2"/><path d="M1205.5,692.4 Q1207.3,694.6 1207.3,695.3 A1.8,1.8 0 0 1 1203.7,695.3 Q1203.7,694.6 1205.5,692.4 Z" fill="#111"/><rect x="1187" y="702.4" width="28.6" height="1.4" fill="#e8e8e8"/></svg>
</body></html>
